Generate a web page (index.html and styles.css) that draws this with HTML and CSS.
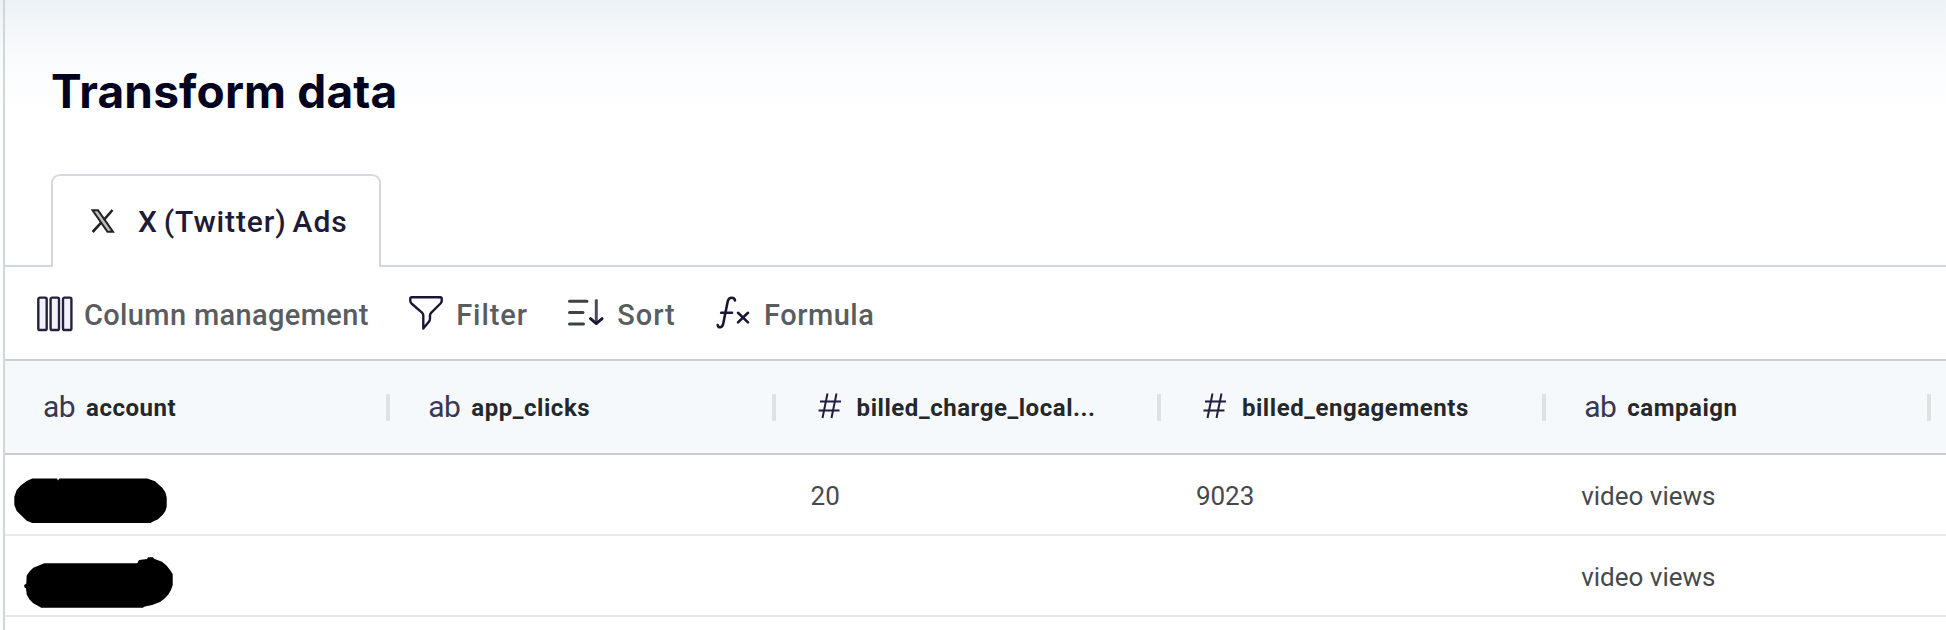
FILE: index.html
```
<!DOCTYPE html>
<html lang="en">
<head>
  <meta charset="UTF-8">
  <title>Transform data</title>
  <link rel="stylesheet" href="styles.css">
</head>
<body>

  <div class="panel">
    <h1 class="title">Transform data</h1>

    <!-- Source tabs -->
    <div class="tabs">
      <div class="tab active">
        <svg class="tab-icon" width="24" height="24" viewBox="0 0 24 24" fill="#bbb" stroke="#222">
          <path d="M1.5 1.2h5.500l15 21.600h-5.500z" stroke-width="2"/>
          <path d="M21.500 1l-8.600 9.800M10.400 13.400L1.600 23" stroke-width="2.600"/>
        </svg>
        <span>X (Twitter) Ads</span>
      </div>
    </div>

    <!-- Toolbar -->
    <div class="toolbar">
      <button class="tool">
        <svg width="36" height="36" viewBox="0 0 36 36" fill="#f3f2f8" stroke="#25223f" stroke-width="2.4">
          <rect x="1.3" y="1.6" width="8.4" height="32.4" rx="1.6"/>
          <rect x="13.6" y="1.6" width="8.4" height="32.4" rx="1.6"/>
          <rect x="26" y="1.6" width="8.4" height="32.4" rx="1.6"/>
        </svg>
        <span class="wide">Column management</span>
      </button>
      <button class="tool loose">
        <svg width="34" height="36" viewBox="0 0 34 36" fill="none" stroke="#1a1736" stroke-width="2.4" stroke-linejoin="round">
          <path d="M2.7 1.2h28.6q1.4 0 1.4 1.5v2q0 1.6-1.2 2.800L22.300 16.600q-1.300 1.300-1.300 3v3.200q0 1.800-1.200 3L14.300 32.500V19.600q0-1.800-1.300-3L2.500 7.500Q1.300 6.300 1.300 4.700v-2q0-1.500 1.400-1.500z"/>
        </svg>
        <span>Filter</span>
      </button>
      <button class="tool loose">
        <svg width="36" height="36" viewBox="0 0 36 36" fill="none" stroke-linecap="round" stroke-linejoin="round">
          <path d="M1.500 5.200h17.500M1.500 16.500h13.500M1.500 28h14" stroke="#3d4247" stroke-width="3"/>
          <path d="M28.300 4.500v22" stroke="#4a4b5c" stroke-width="3"/>
          <path d="M22.500 22.600l5.800 5 5.800-5" stroke="#1a1736" stroke-width="2.800"/>
        </svg>
        <span>Sort</span>
      </button>
      <button class="tool">
        <svg width="36" height="36" viewBox="0 0 36 36" fill="none" stroke="#1a1736" stroke-width="2.600" stroke-linecap="round">
          <path d="M19 4.500c-.4-3.400-6-4-7.200.6L7.200 27.800c-.7 4-4.800 4.700-5.500 1.200"/>
          <path d="M5.200 16.700h10.800"/>
          <path d="M22 16.800l10 9.600M32 16.800l-10 9.600"/>
        </svg>
        <span>Formula</span>
      </button>
    </div>

    <!-- Data table -->
    <div class="table">
      <div class="row head">
        <div class="cell"><span class="type">ab</span><span class="name">account</span></div>
        <div class="cell"><span class="type">ab</span><span class="name">app_clicks</span></div>
        <div class="cell">
          <svg class="type-num" width="24" height="26" viewBox="0 0 24 26" fill="none" stroke="#211d3d" stroke-width="2">
            <path d="M2 8.500h21M.5 17.500h21M9.500 .5L4.500 25M18.500 .5L13.500 25"/>
          </svg>
          <span class="name">billed_charge_local...</span>
        </div>
        <div class="cell">
          <svg class="type-num" width="24" height="26" viewBox="0 0 24 26" fill="none" stroke="#211d3d" stroke-width="2">
            <path d="M2 8.500h21M.5 17.500h21M9.500 .5L4.500 25M18.500 .5L13.500 25"/>
          </svg>
          <span class="name">billed_engagements</span>
        </div>
        <div class="cell"><span class="type">ab</span><span class="name">campaign</span></div>
      </div>
      <div class="row">
        <div class="cell redacted">
          <svg width="180" height="79" viewBox="0 0 180 79">
            <path d="M32.300 23.500H57l1 2 1.300-2h88l7.700 2.800 7.300 6.400 3 4.600 1.400 5v9.400l-1.400 4.600-3 4-4.300 4-6.300 3-1 .7H32.300l-5.600-2.300-10-9.700-2.400-6v-8.300l2.400-6.700 4-4.500 6-4.500z"/>
          </svg>
        </div>
        <div class="cell"></div>
        <div class="cell">20</div>
        <div class="cell">9023</div>
        <div class="cell">video views</div>
      </div>
      <div class="row">
        <div class="cell redacted">
          <svg width="180" height="79" viewBox="0 0 180 79">
            <path d="M44.300 27.300h93l1.700-3.300 8-1 1-1.700h5l1 1.500 8 3 4.500 3.700 3.500 4.500 2.700 4v11l-1.700 5-3 5-4 4-4 3-8 3-8 1.700-1 1H41.300l-8-4.500-4-4-2.600-4.700-.7-6-1.700-1.300v-2.200l2-1.500.4-8 3-4.300 3.600-3.500 5-2z"/>
          </svg>
        </div>
        <div class="cell"></div>
        <div class="cell"></div>
        <div class="cell"></div>
        <div class="cell">video views</div>
      </div>
    </div>
  </div>

</body>
</html>
```
FILE: styles.css
```
* {
  box-sizing: border-box;
}

body {
  margin: 0;
  height: 630px;
  overflow: hidden;
  background: linear-gradient(#edf2f6 0, #f8fafc 50px, #fff 110px);
  font-family: Roboto, sans-serif;
}

.panel {
  height: 630px;
  margin-left: 3px;
  border-left: 2px solid #cdd8db;
}

.title {
  height: 174px;
  margin: 0;
  padding: 63px 0 0 46px;
  font: 700 46px/57px Inter, sans-serif;
  letter-spacing: 0.15px;
  color: #03021f;
}

/* Tabs: the line runs on both sides of the active tab */
.tabs {
  display: flex;
  height: 93px;
}

.tabs::before,
.tabs::after {
  content: "";
  width: 46px;
  border-bottom: 2px solid #cfd8da;
}

.tabs::after {
  flex: 1;
}

.tab {
  display: flex;
  align-items: center;
  width: 330px;
  padding-left: 38px;
  border: 2px solid #d3dadc;
  border-bottom: 0;
  border-radius: 9px 9px 0 0;
  background: #fff;
  font-size: 30px;
  font-weight: 500;
  letter-spacing: 0.9px;
  word-spacing: -2.5px;
  color: #1d1b35;
  white-space: nowrap;
}

.tab-icon {
  margin: 0 23px 2px 0;
}

/* Toolbar */
.toolbar {
  display: flex;
  align-items: center;
  gap: 40.5px;
  height: 94px;
  padding: 2px 0 0 32px;
  border-bottom: 2px solid #cdd0d1;
  background: #fff;
}

.tool {
  display: flex;
  align-items: center;
  gap: 12px;
  padding: 0;
  border: 0;
  background: none;
  font: 500 29px Roboto, sans-serif;
  letter-spacing: 0.5px;
  color: #5a5d5f;
}

.tool span {
  padding-top: 1px;
}

.tool .wide {
  margin-left: -1px;
  letter-spacing: 0.35px;
}

.tool.loose {
  gap: 13px;
  letter-spacing: 0.9px;
}

/* Table */
.row {
  display: grid;
  grid-template-columns: repeat(5, 385.3px);
  height: 81px;
  border-bottom: 2px solid #e7e9eb;
  background: #fff;
}

.cell {
  display: flex;
  align-items: center;
  padding: 3px 0 0 35px;
  font-size: 26px;
  color: #46494b;
}

.head {
  height: 94px;
  border-bottom-color: #c9cdcf;
  background: #f6f9fb;
}

.head .cell {
  padding: 0 0 0 38px;
}

/* Column resize handle */
.head .cell::after {
  content: "";
  width: 4px;
  height: 27px;
  margin-left: auto;
  background: #dfe2e3;
}

.type {
  width: 43px;
  padding-bottom: 1px;
  font-size: 30px;
  font-weight: 400;
  line-height: 34px;
  letter-spacing: -0.5px;
  color: #3a3654;
}

.type-num {
  margin: 0 15px 2px 4px;
}

.name {
  padding-top: 2px;
  font-size: 24px;
  font-weight: 700;
  letter-spacing: 0.55px;
  color: #24282b;
}

.redacted {
  align-items: flex-start;
  padding: 0;
}

/* Blobs start over the panel padding */
.redacted svg {
  margin-left: -5px;
}
```
